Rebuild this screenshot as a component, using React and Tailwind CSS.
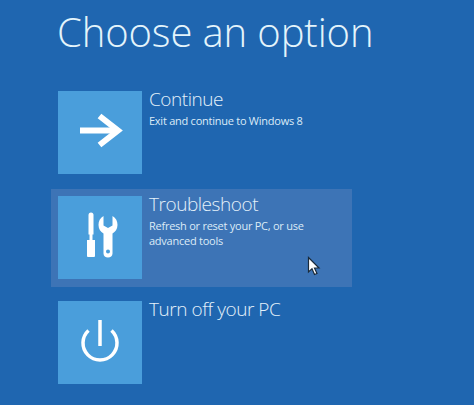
const options = [
  { title: "Continue", lines: ["Exit and continue to Windows 8"], icon: "arrow" },
  { title: "Troubleshoot", lines: ["Refresh or reset your PC, or use", "advanced tools"], icon: "tools", active: true },
  { title: "Turn off your PC", lines: [], icon: "power" },
];

function TileIcon({ name }) {
  if (name === "arrow") {
    return (
      <svg width="84" height="83" viewBox="0 0 84 83" fill="none" stroke="#fff">
        <path d="M22 39.500H59" strokeWidth="6" />
        <path d="M41.500 25L60 39.500L41.500 54" strokeWidth="6" />
      </svg>
    );
  }
  if (name === "tools") {
    return (
      <svg width="84" height="83" viewBox="0 0 84 83" fill="#fff">
        <path d="M30.500 19a2.500 2.500 0 0 1 5 0v19.500h-5z" />
        <path d="M31.500 38h3v6h-3z" />
        <path d="M29 44h8v16a1 1 0 0 1-1 1h-6a1 1 0 0 1-1-1z" />
        <path
          fillRule="evenodd"
          d="M45.500 20c-3.500 2-5 5-5 9 0 4 2.200 7 5 8.500v20c0 2.500 2 4 4.500 4s4.500-1.500 4.500-4v-20c2.800-1.500 5-4.500 5-8.500 0-4-1.500-7-5-9v9.500L50 32l-4.500-2.500zM50 53.500a2 2 0 1 1 0 4 2 2 0 0 1 0-4z"
        />
      </svg>
    );
  }
  return (
    <svg width="84" height="83" viewBox="0 0 84 83" fill="none" stroke="#fff" strokeWidth="3.500">
      <path d="M42 19V45" />
      <path d="M30.500 29.500a17 17 0 1 0 23 0" />
    </svg>
  );
}

function OptionRow({ option }) {
  return (
    <div className={`flex h-[98px] w-[301px] gap-[7px] p-[7px] ${option.active ? "bg-[#3d74b6]" : ""}`}>
      <div className="h-[83px] w-[84px] shrink-0 bg-[#4a9edb]">
        <TileIcon name={option.icon} />
      </div>
      <div className="text-[#e4f1fa]">
        <div className="-mt-[6px] text-[19px] leading-[28px] font-light tracking-[-0.45px]">{option.title}</div>
        {option.lines.map((line) => (
          <div key={line} className="text-[11px] leading-[15px] tracking-[-0.25px] text-[#dcebf7]">
            {line}
          </div>
        ))}
      </div>
    </div>
  );
}

export default function App() {
  return (
    <div className="h-[405px] w-[474px] overflow-hidden bg-[#1f66b0] pl-[51px] font-['Open_Sans',sans-serif]">
      <h1 className="h-[84px] pl-[6px] pt-[5px] text-[40px] leading-[54px] font-light tracking-[-0.12px] text-[#e4f4fb]">
        Choose an option
      </h1>
      <div className="flex flex-col gap-[7px]">
        {options.map((option) => (
          <OptionRow key={option.title} option={option} />
        ))}
      </div>
      <svg className="absolute left-[307px] top-[256px]" width="14" height="20" viewBox="0 0 14 20">
        <path d="M1.500 1.500V16l3.500-3.200 2.500 5.700 2.500-1-2.500-5.500h4.500z" fill="#fff" stroke="#1a2a3a" strokeWidth="1.200" />
      </svg>
    </div>
  );
}
